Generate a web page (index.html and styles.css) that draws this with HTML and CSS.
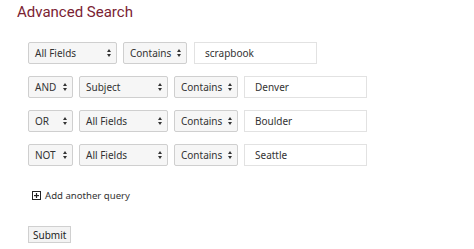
FILE: index.html
```html
<!DOCTYPE html>
<html lang="en">
<head>
  <meta charset="UTF-8">
  <title>Advanced Search</title>
  <link rel="stylesheet" href="styles.css">
</head>
<body>
  <h1 class="page-title">Advanced Search</h1>

  <form class="search-form">
    <div class="query-row">
      <div class="fake-select sel-field-wide">All Fields</div>
      <div class="fake-select sel-match">Contains</div>
      <div class="term-input">scrapbook</div>
    </div>
    <div class="query-row">
      <div class="fake-select sel-bool">AND</div>
      <div class="fake-select sel-field">Subject</div>
      <div class="fake-select sel-match">Contains</div>
      <div class="term-input">Denver</div>
    </div>
    <div class="query-row">
      <div class="fake-select sel-bool">OR</div>
      <div class="fake-select sel-field">All Fields</div>
      <div class="fake-select sel-match">Contains</div>
      <div class="term-input">Boulder</div>
    </div>
    <div class="query-row">
      <div class="fake-select sel-bool">NOT</div>
      <div class="fake-select sel-field">All Fields</div>
      <div class="fake-select sel-match">Contains</div>
      <div class="term-input">Seattle</div>
    </div>

    <div class="add-query">
      <svg class="plus-box" width="9" height="9" viewBox="0 0 9 9">
        <rect x="0.5" y="0.5" width="8" height="8" fill="none" stroke="#222" stroke-width="1"/>
        <rect x="2" y="4" width="5" height="1.2" fill="#222"/>
        <rect x="3.9" y="2" width="1.2" height="5" fill="#222"/>
      </svg>
      <span>Add another query</span>
    </div>

    <div class="submit-btn">Submit</div>
  </form>
</body>
</html>
```

FILE: styles.css
```css
body {
  margin: 0;
  background: #fff;
  font-family: "Noto Sans", "DejaVu Sans", sans-serif;
  color: #333;
}

.page-title {
  margin: 0;
  padding: 1px 0 0 17px;
  font-family: Roboto, "Noto Sans", sans-serif;
  font-size: 15px;
  font-weight: normal;
  color: #7a2232;
  line-height: 22px;
}

.search-form {
  padding: 19px 0 0 28px;
}

.query-row {
  display: flex;
  gap: 6px;
  margin-bottom: 12px;
  height: 22px;
}

.fake-select {
  box-sizing: border-box;
  height: 22px;
  padding: 0 0 0 6px;
  border: 1px solid #cfcfcf;
  border-radius: 2px;
  background: #f6f6f6;
  font-size: 10px;
  line-height: 20px;
  color: #333;
  position: relative;
}

/* little up/down arrows */
.fake-select::after {
  content: "";
  position: absolute;
  right: 5px;
  top: 6px;
  width: 0;
  height: 0;
  border-left: 2px solid transparent;
  border-right: 2px solid transparent;
  border-bottom: 3px solid #333;
}

.fake-select::before {
  content: "";
  position: absolute;
  right: 5px;
  top: 11px;
  width: 0;
  height: 0;
  border-left: 2px solid transparent;
  border-right: 2px solid transparent;
  border-top: 3px solid #333;
}

.sel-field-wide { width: 89px; }
.sel-bool { width: 45px; }
.sel-field { width: 89px; }
.sel-match { width: 64px; }

.term-input {
  box-sizing: border-box;
  width: 123px;
  height: 22px;
  padding-left: 10px;
  border: 1px solid #e2e2e2;
  background: #fff;
  font-size: 10px;
  line-height: 20px;
  color: #333;
}

.query-row:first-child .term-input {
  margin-left: 1px;
}

.add-query {
  display: flex;
  align-items: center;
  gap: 4px;
  margin: 23px 0 0 4px;
  font-size: 9.6px;
  color: #333;
}

.submit-btn {
  display: inline-block;
  margin-top: 24px;
  padding: 0 4px;
  height: 17px;
  line-height: 16px;
  box-sizing: border-box;
  border: 1px solid #d0d0d0;
  background: #f3f3f3;
  font-size: 10px;
  color: #222;
}
```
